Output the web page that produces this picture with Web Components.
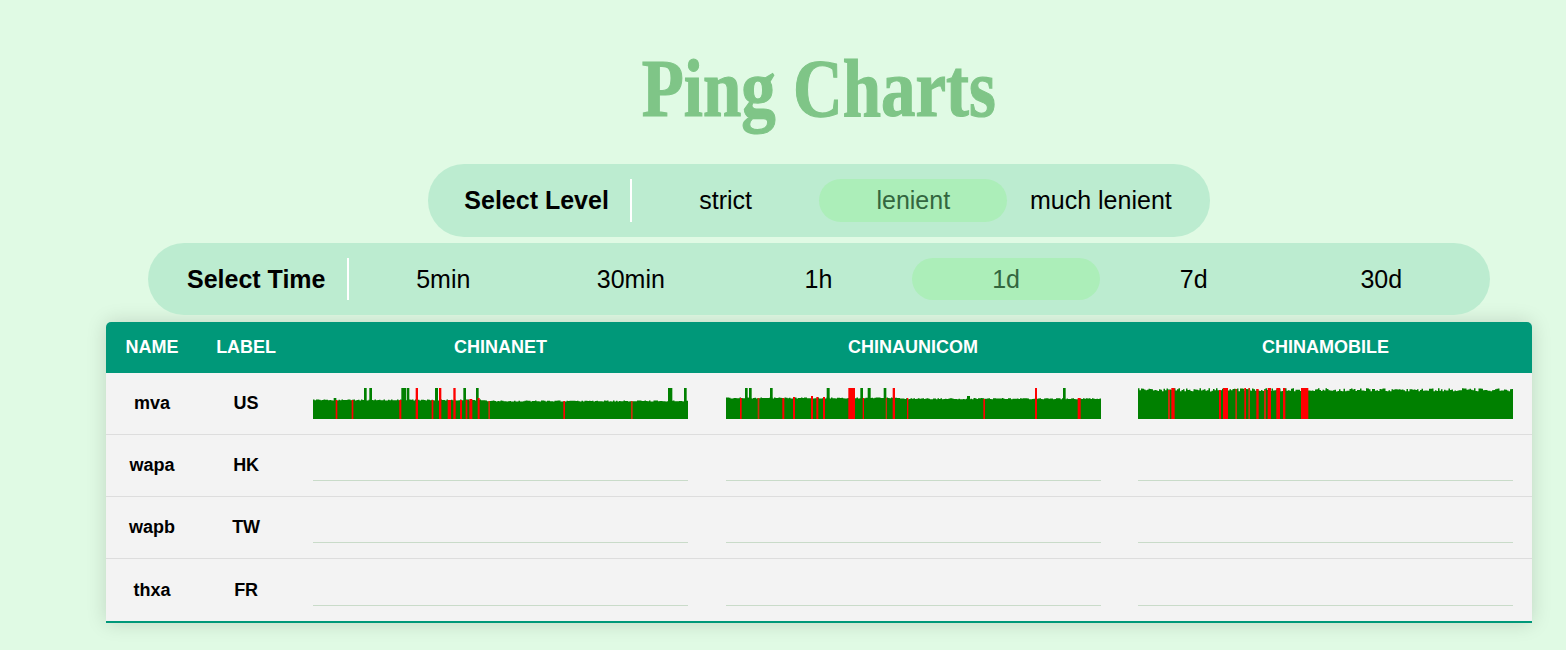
<!DOCTYPE html>
<html lang="en">

<head>
    <meta charset="UTF-8">
    <title>Ping Charts</title>
    <style>
        body {
            margin: 0;
            padding-left: 72px;
            background-color: #e0fae4;
            font-family: "Liberation Sans", Arial, sans-serif;
            overflow: hidden;
            height: 650px;
        }
    </style>
</head>

<body>

    <ping-title>Ping Charts</ping-title>
    <ping-selector label="Select Level" options="strict,lenient,much lenient" active="lenient" style="--pad-left: 36px; --gap: 21px; --pill: 73px; --item: 43px; --item-w: 187.6px"></ping-selector>
    <ping-selector label="Select Time" options="5min,30min,1h,1d,7d,30d" active="1d" style="--pad-left: 39px; --gap: 22px; --pill: 72px; --item: 42px; --item-w: 187.6px; margin-top: 6px"></ping-selector>
    <ping-table>
        <ping-row name="mva" label="US" charts="a,b,c"></ping-row>
        <ping-row name="wapa" label="HK"></ping-row>
        <ping-row name="wapb" label="TW"></ping-row>
        <ping-row name="thxa" label="FR" last></ping-row>
    </ping-table>

</body>

<script>

    class PingTitle extends HTMLElement {
        constructor() {
            super()
            this.attachShadow({ mode: 'open' })
            this.shadowRoot.innerHTML = `
            <style>
                :host {
                    display: flex;
                    justify-content: center;
                    height: 164px;
                    box-sizing: border-box;
                }
                h1 {
                    margin: 48px 0 0;
                    font: bold 82px/82px "Liberation Serif", serif;
                    color: #7fc587;
                    -webkit-text-stroke: 1.2px #7fc587;
                    white-space: nowrap;
                    transform: scaleX(0.84);
                }
            </style>
            <h1><slot></slot></h1>
            `
        }
    }

    class PingSelector extends HTMLElement {
        connectedCallback() {
            this.attachShadow({ mode: 'open' })
            const active = this.getAttribute('active')
            const options = this.getAttribute('options').split(',')

            let items = ''
            options.map((opcao) => {
                items += `<div class="item ${opcao === active ? 'active' : ''}">${opcao}</div>`
            })

            this.shadowRoot.innerHTML = `
            <style>
                :host {
                    display: flex;
                    justify-content: center;
                    font-size: 25px;
                    color: #000;
                }
                .pill {
                    display: flex;
                    align-items: center;
                    box-sizing: border-box;
                    height: var(--pill);
                    padding: 0 15px 0 var(--pad-left);
                    background-color: #bcecd0;
                    border-radius: 36px;
                }
                .label {
                    font-weight: bold;
                    white-space: nowrap;
                    padding-right: var(--gap);
                    border-right: 2px solid #fff;
                    height: var(--item);
                    line-height: var(--item);
                }
                .item {
                    width: var(--item-w);
                    height: var(--item);
                    line-height: var(--item);
                    text-align: center;
                    border-radius: 22px;
                    white-space: nowrap;
                }
                .active {
                    background-color: #aceeb9;
                    color: #33663f;
                }
            </style>
            <div class="pill">
                <div class="label">${this.getAttribute('label')}</div>
                ${items}
            </div>
            `
        }
    }

    const COLUNAS = 'grid-template-columns: 92px 96.25px repeat(3, 412.5px);'

    class PingTable extends HTMLElement {
        constructor() {
            super()
            this.attachShadow({ mode: 'open' })
            this.shadowRoot.innerHTML = `
            <style>
                :host {
                    display: block;
                    width: 1426px;
                    margin: 7px auto 0;
                    border-radius: 5px 5px 0 0;
                    background-color: #f3f3f3;
                    box-shadow: 0 0 20px rgba(0, 0, 0, 0.15);
                    font-size: 18px;
                    font-weight: bold;
                }
                .head {
                    display: grid;
                    ${COLUNAS}
                    height: 51px;
                    align-items: center;
                    text-align: center;
                    color: #fff;
                    background-color: #009879;
                    border-radius: 5px 5px 0 0;
                }
            </style>
            <div class="head">
                <div>NAME</div>
                <div>LABEL</div>
                <div>CHINANET</div>
                <div>CHINAUNICOM</div>
                <div>CHINAMOBILE</div>
            </div>
            <slot></slot>
            `
        }
    }

    class PingRow extends HTMLElement {
        connectedCallback() {
            this.attachShadow({ mode: 'open' })
            const last = this.hasAttribute('last')
            const charts = (this.getAttribute('charts') || ',,').split(',')

            this.shadowRoot.innerHTML = `
            <style>
                :host {
                    display: grid;
                    ${COLUNAS}
                    height: ${last ? 64 : 62}px;
                    box-sizing: border-box;
                    align-items: center;
                    text-align: center;
                    color: #000;
                    border-bottom: ${last ? '2px solid #009879' : '1px solid #ddd'};
                }
                ping-chart { justify-self: center; align-self: start; margin-top: ${last ? 16 : 15}px; }
            </style>
            <div>${this.getAttribute('name')}</div>
            <div>${this.getAttribute('label')}</div>
            ${charts.map(c => `<ping-chart data="${c}"></ping-chart>`).join('')}
            `
        }
    }

    // spikes copied from the zoomed picture: [x0, x1, top, color], x in 3x px
    const GREEN = '#008000', RED = '#ff0000', DIM = '#c8300c'

    const SERIES = {
        a: {
            origem: 39,
            base: x => x < 560 ? 12 : 13,
            jitter: 0.6,
            bars: [
                [192, 200, 0, GREEN], [208, 216, 0, GREEN], [304, 318, 0, GREEN], [320, 328, 0, GREEN],
                [405, 414, 0, GREEN], [490, 498, 0, GREEN], [528, 536, 0, GREEN], [1104, 1117, 0, GREEN],
                [1152, 1160, 0, GREEN], [101, 109, 10, GREEN],
                [107, 112, 12, RED], [155, 160, 12, RED], [298, 304, 12, RED], [347, 354, 0, RED],
                [395, 400, 12, RED], [417, 424, 0, RED], [443, 453, 12, RED], [460, 467, 0, RED],
                [480, 486, 12, RED], [497, 502, 12, RED], [508, 517, 11, RED], [533, 539, 10, RED],
                [565, 570, 13, DIM], [790, 795, 13, RED], [993, 998, 13, DIM]
            ]
        },
        b: {
            origem: 33,
            base: x => x < 560 ? 10 : 10.7,
            jitter: 0.6,
            bars: [
                [90, 98, 0, GREEN], [102, 110, 0, GREEN], [165, 173, 0, GREEN], [335, 344, 0, GREEN],
                [436, 444, 0, GREEN], [458, 467, 0, GREEN], [506, 514, 0, GREEN], [1044, 1052, 0, GREEN],
                [756, 765, 8, GREEN],
                [75, 80, 10, RED], [128, 133, 10, DIM], [202, 208, 10, RED], [234, 240, 9, RED],
                [288, 294, 8, RED], [304, 310, 9, RED], [324, 330, 9, RED], [400, 420, 0, RED],
                [443, 447, 10, RED], [512, 516, 10, DIM], [533, 540, 0, RED], [576, 580, 10, RED],
                [805, 810, 11, RED], [960, 966, 0, RED], [1088, 1097, 10, RED]
            ]
        },
        c: {
            origem: 39,
            base: x => 1.8,
            jitter: 1.6,
            bars: [
                [129, 135, 2, DIM], [139, 149, 0, RED], [282, 288, 2, RED], [294, 309, 0, RED],
                [331, 336, 1, DIM], [358, 363, 0, RED], [370, 375, 0, DIM], [394, 401, 1, RED],
                [417, 423, 2, DIM], [428, 438, 0, RED], [454, 465, 0, RED], [474, 481, 0, RED],
                [528, 550, 0, RED]
            ]
        }
    }

    class PingChart extends HTMLElement {
        connectedCallback() {
            this.attachShadow({ mode: 'open' })
            const serie = SERIES[this.getAttribute('data')]
            let rects = ''

            if (serie) {
                let semente = serie.origem * 7 + 13
                const aleatorio = () => {
                    semente = (semente * 16807) % 2147483647
                    return semente / 2147483647
                }
                // one step outline for the green mass, so neighbouring bars show no seam
                let d = 'M0 31'
                for (let x = 0; x < 375; x += 1.5) {
                    const topo = Math.max(0, serie.base(x * 3 + serie.origem) + (aleatorio() - 0.5) * serie.jitter * 2)
                    d += `V${topo.toFixed(2)}H${x + 1.5}`
                }
                d += 'V31Z'
                rects += `<path d="${d}" fill="${GREEN}"/>`
                serie.bars.map(([x0, x1, topo, cor]) => {
                    const x = (x0 - serie.origem) / 3
                    rects += `<rect x="${x.toFixed(2)}" y="${topo}" width="${((x1 - x0) / 3).toFixed(2)}" height="${31 - topo}" fill="${cor}"/>`
                })
            } else {
                rects = `<rect x="0" y="30" width="375" height="1" fill="#c9dbc9"/>`
            }

            this.shadowRoot.innerHTML = `
            <style>
                :host { display: block; width: 375px; height: 31px; }
                svg { display: block; }
            </style>
            <svg width="375" height="31" viewBox="0 0 375 31">${rects}</svg>
            `
        }
    }

    customElements.define('ping-title', PingTitle)
    customElements.define('ping-selector', PingSelector)
    customElements.define('ping-table', PingTable)
    customElements.define('ping-row', PingRow)
    customElements.define('ping-chart', PingChart)

</script>

</html>
